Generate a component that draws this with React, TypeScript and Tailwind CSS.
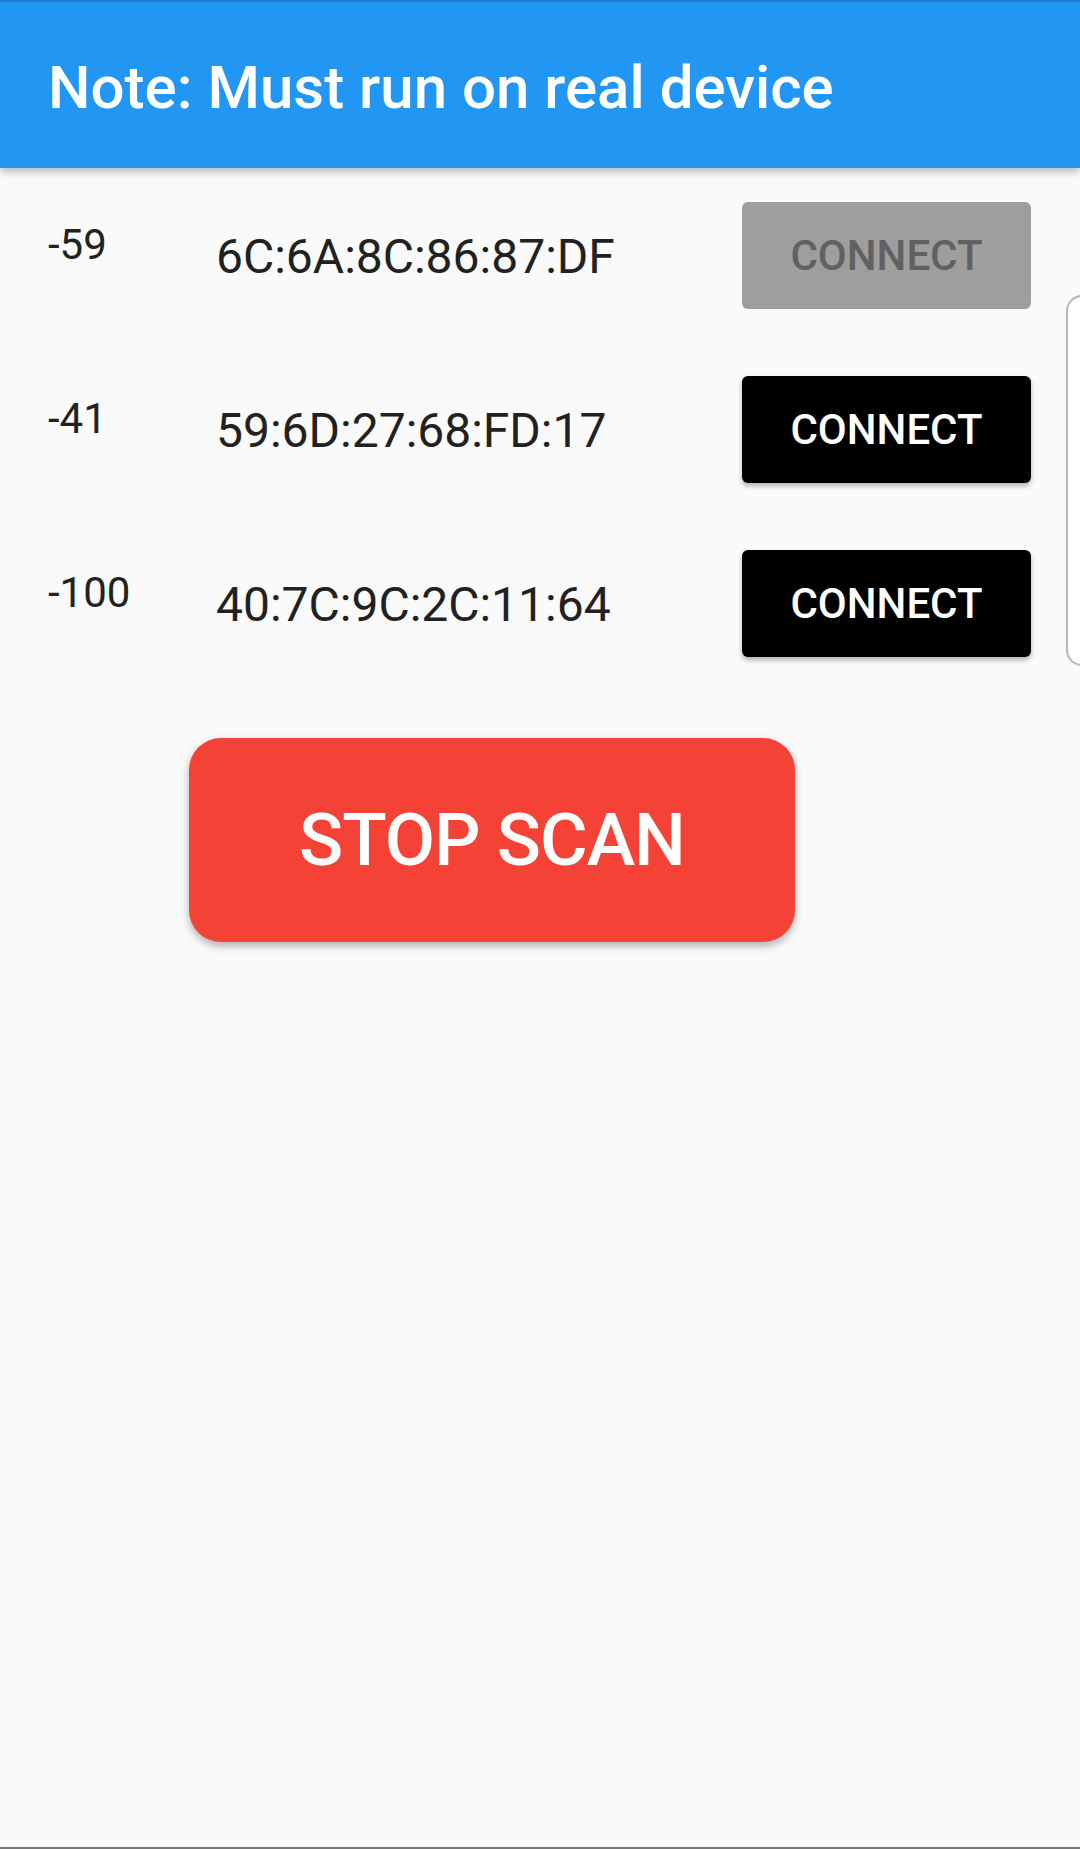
import React from "react";

const devices = [
  { rssi: "-59", mac: "6C:6A:8C:86:87:DF", disabled: true },
  { rssi: "-41", mac: "59:6D:27:68:FD:17", disabled: false },
  { rssi: "-100", mac: "40:7C:9C:2C:11:64", disabled: false },
];

export default function App() {
  return (
    <div
      className="relative h-[1849px] w-[1080px] overflow-hidden bg-[#FAFAFA] border-b-2 border-[#777777]"
      style={{ fontFamily: "Roboto, 'Noto Sans', sans-serif" }}
    >
      <header className="relative z-10 flex h-[168px] items-center border-t-2 border-[#1B7BD1] bg-[#2196F3] pl-[48px] pt-[6px] shadow-[0_4px_8px_rgba(0,0,0,0.25)]">
        <h1 className="text-[60px] font-medium leading-none text-white">
          Note: Must run on real device
        </h1>
      </header>

      <div className="flex flex-col gap-[67px] pt-[34px]">
        {devices.map((d) => (
          <div key={d.mac} className="flex h-[107px] items-start pl-[48px] pr-[49px]">
            <div className="mt-[22px] w-[168px] text-[42px] leading-none text-[#212121]">
              {d.rssi}
            </div>
            <div className="mt-[31px] flex-1 text-[48px] leading-none text-[#212121]">
              {d.mac}
            </div>
            <button
              className={
                d.disabled
                  ? "flex h-[107px] w-[289px] items-center justify-center rounded-[6px] bg-[#9E9E9E] text-[42px] font-medium leading-none text-[#616161]"
                  : "flex h-[107px] w-[289px] items-center justify-center rounded-[6px] bg-black text-[42px] font-medium leading-none text-white shadow-[0_3px_5px_rgba(0,0,0,0.3)]"
              }
            >
              CONNECT
            </button>
          </div>
        ))}
      </div>

      <div className="mt-[81px] pl-[189px]">
        <button className="flex h-[204px] w-[606px] items-center justify-center rounded-[32px] bg-[#F44336] text-[73px] font-medium leading-none tracking-[-1px] text-white shadow-[0_4px_8px_rgba(0,0,0,0.3)]">
          STOP SCAN
        </button>
      </div>

      <div className="absolute left-[1066px] top-[295px] h-[371px] w-[40px] rounded-[16px] border-2 border-[#B8B8B8] bg-white" />
    </div>
  );
}
